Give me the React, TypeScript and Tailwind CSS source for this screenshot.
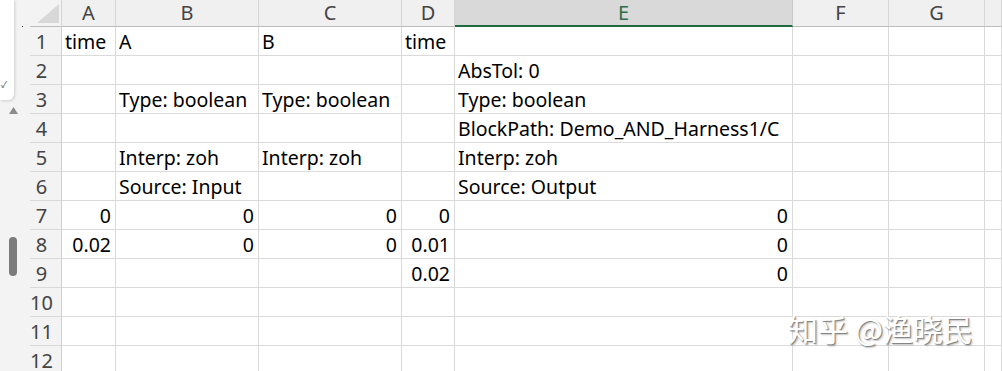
import React from "react";

const cols = ["A", "B", "C", "D", "E", "F", "G", ""];

type Cell = { t: string; r?: boolean };
const rows: (Cell | null)[][] = [
  [{ t: "time" }, { t: "A" }, { t: "B" }, { t: "time" }, null, null, null, null],
  [null, null, null, null, { t: "AbsTol: 0" }, null, null, null],
  [null, { t: "Type: boolean" }, { t: "Type: boolean" }, null, { t: "Type: boolean" }, null, null, null],
  [null, null, null, null, { t: "BlockPath: Demo_AND_Harness1/C" }, null, null, null],
  [null, { t: "Interp: zoh" }, { t: "Interp: zoh" }, null, { t: "Interp: zoh" }, null, null, null],
  [null, { t: "Source: Input" }, null, null, { t: "Source: Output" }, null, null, null],
  [{ t: "0", r: true }, { t: "0", r: true }, { t: "0", r: true }, { t: "0", r: true }, { t: "0", r: true }, null, null, null],
  [{ t: "0.02", r: true }, { t: "0", r: true }, { t: "0", r: true }, { t: "0.01", r: true }, { t: "0", r: true }, null, null, null],
  [null, null, null, { t: "0.02", r: true }, { t: "0", r: true }, null, null, null],
  [null, null, null, null, null, null, null, null],
  [null, null, null, null, null, null, null, null],
  [null, null, null, null, null, null, null, null],
];

export default function App() {
  return (
    <div
      className="relative flex w-[1002px] h-[371px] overflow-hidden bg-white"
      style={{ fontFamily: '"Noto Sans", "Noto Sans CJK SC", sans-serif' }}
    >
      {/* left strip */}
      <div className="relative w-[30px] shrink-0 bg-[#f3f3f3]">
        <div className="absolute left-0 top-0 w-[14px] h-[100px] bg-white rounded-br-[6px] shadow-[1px_1px_3px_rgba(0,0,0,0.15)]">
          <span className="absolute left-[1px] top-[80px] text-[9px] leading-none text-[#555]">✓</span>
        </div>
        <div className="absolute left-[22px] top-[26px] w-[1px] h-[1px] bg-[#333]" />
        <svg className="absolute left-[9px] top-[107px]" width="9" height="7" viewBox="0 0 9 7">
          <path d="M4.5 0 L9 7 L0 7 Z" fill="#8a8a8a" />
        </svg>
        <div className="absolute left-[9px] top-[237px] w-[8px] h-[39px] rounded-[4px] bg-[#7b7b7b]" />
      </div>
      <div className="grid grid-cols-[32px_54px_143px_143px_53px_338px_96px_96px_1fr] flex-1 content-start">
        {/* header row */}
        <div className="relative h-[27px] bg-[#f3f3f3] border-b border-[#bdbdbd] border-r border-r-[#d4d4d4]">
          <svg className="absolute right-[2px] bottom-[3px]" width="22" height="19" viewBox="0 0 22 19">
            <path d="M22 0 L22 19 L0 19 Z" fill="#d8d8d8" />
          </svg>
        </div>
        {cols.map((c, i) => (
          <div
            key={i}
            className={
              c === "E"
                ? "h-[27px] flex items-center justify-center bg-[#d9d9d9] border-b-2 border-[#1e6b41] border-r border-r-[#c8c8c8] text-[20px] text-[#2a6f48]"
                : "h-[27px] flex items-center justify-center bg-[#f0f0f0] border-b border-[#bdbdbd] border-r border-r-[#d6d6d6] text-[20px] text-[#444]"
            }
          >
            {c}
          </div>
        ))}
        {rows.map((row, ri) => (
          <React.Fragment key={ri}>
            <div className="h-[29px] flex items-end justify-center pr-[8px] pb-[0px] bg-[#f3f3f3] border-b border-[#d9d9d9] border-r border-r-[#cfcfcf] text-[20px] leading-[27px] text-[#444]">
              {ri + 1}
            </div>
            {row.map((cell, ci) => (
              <div
                key={ci}
                className={
                  (cell?.r ? "justify-end pr-[4px] " : "justify-start pl-[3px] ") +
                  "h-[29px] flex items-end pb-[0px] border-b border-r border-[#dadada] text-[19.5px] leading-[27px] text-black whitespace-nowrap overflow-visible"
                }
              >
                {cell?.t ?? ""}
              </div>
            ))}
          </React.Fragment>
        ))}
      </div>
      <div
        className="absolute left-[788px] top-[308px] text-[30px] leading-[40px] text-white whitespace-nowrap"
        style={{
          fontFamily: '"Noto Sans CJK SC", sans-serif',
          textShadow: "1px 1px 1px #7c7c7c, 2px 2px 2px rgba(0,0,0,0.2)",
        }}
      >
        知乎 @渔晓民
      </div>
    </div>
  );
}
